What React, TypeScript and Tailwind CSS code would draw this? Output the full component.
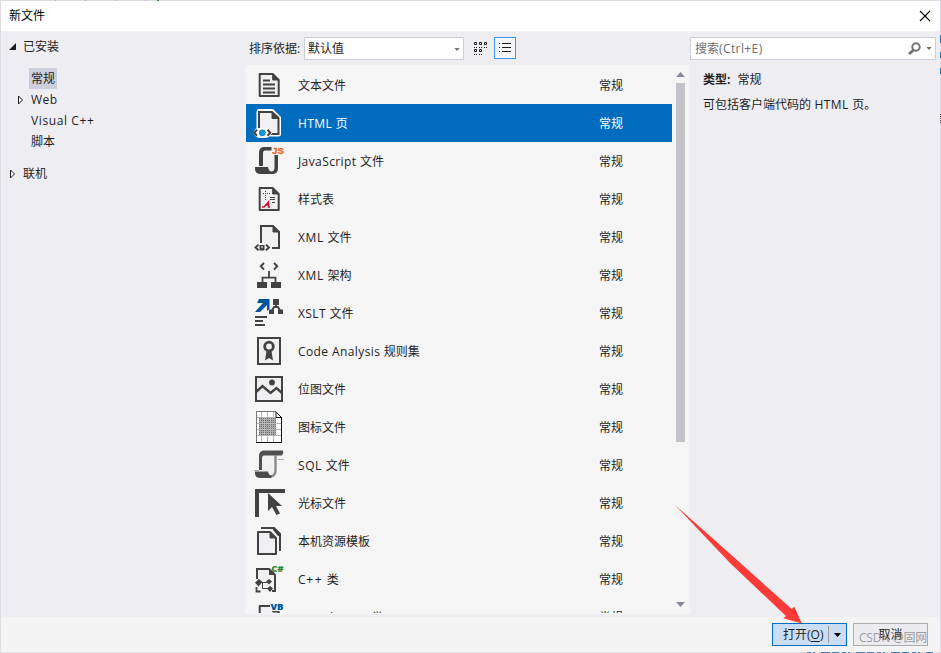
import { useState } from 'react'
import type { ReactNode } from 'react'
import clsx from 'clsx'

const DARK = '#424242'

function Page({ x = 7.7, y = 8, w = 19, h = 22 }: { x?: number; y?: number; w?: number; h?: number }) {
  return (
    <>
      <path
        d={`M${x} ${y}h${w - 6}l6 6v${h - 6}h-${w}z`}
        fill="#f0eff1"
        stroke={DARK}
        strokeWidth="2"
        strokeLinejoin="round"
      />
      <path d={`M${x + w - 6} ${y}v6h6z`} fill={DARK} stroke={DARK} />
    </>
  )
}

function Scroll({ fill = DARK }: { fill?: string }) {
  return (
    <>
      <path d="M9 25V9q0-3 4-3h10v20q0 5-3 5H8z" fill="#f0eff1" />
      <path d="M7 24V10.500Q7 5 12.500 5H22v3.500h-9q-2 0-2 3V24z" fill={fill} />
      <path d="M22.500 13H26v13q0 6-6 6h-3v-2.500h2.500q3 0 3-4z" fill={fill} />
      <path d="M3 25h13q.5 4 3.500 5l-1 2H9q-6 0-6-5z" fill={fill} />
    </>
  )
}

function Badge({ x, y, fill, children }: { x: number; y: number; fill: string; children: string }) {
  return (
    <text x={x} y={y} fill={fill} fontSize="9.500" fontWeight="800" fontFamily="Open Sans, sans-serif">
      {children}
    </text>
  )
}

const icons: Record<string, ReactNode> = {
  text: (
    <>
      <Page />
      <path d="M11 14.500h7M11 18.500h12M11 22.500h12M11 26.500h12" stroke={DARK} strokeWidth="2" />
    </>
  ),
  html: (
    <>
      <path d="M4.500 24V8q0-3 3-3H21l8 8v17q0 2.500-2.500 2.500H15.500L13 34H7q-5-2-5.500-5 .5-3 3-5z" fill="#fff" />
      <path d="M7 24V8h13l6.500 6v16H17" fill="#f0eff1" stroke={DARK} strokeWidth="2" />
      <path d="M20 8v6.500h6.500z" fill={DARK} stroke={DARK} />
      <path d="M6 24h10l4.500 5-4.500 4.500H6L2 29z" fill="#fff" />
      <path d="M5 25.800L2.200 28.800l2.800 3M15.500 25.800l2.800 3-2.800 3" fill="none" stroke={DARK} strokeWidth="2" />
      <circle cx="10.300" cy="28.800" r="3.400" fill="#1592d2" />
    </>
  ),
  js: (
    <>
      <Scroll />
      <path d="M19.500 4H32v9H19.500z" fill="#f5f5f5" />
      <text
        x="20"
        y="12"
        fill="#f26522"
        stroke="#f26522"
        strokeWidth="0.300"
        fontSize="9.800"
        fontWeight="700"
        fontFamily="Liberation Sans, sans-serif"
      >
        JS
      </text>
    </>
  ),
  css: (
    <>
      <Page />
      <path d="M11 13.500h8M13.500 11v10" stroke={DARK} strokeDasharray="1 1" />
      <path d="M18 17.500h5M18 19.500h5M20 22.500h3" stroke={DARK} />
      <path d="M10 27h2l4.500-5v5H18M13 25h4" fill="none" stroke="#c4192f" strokeWidth="1.600" />
    </>
  ),
  xml: (
    <>
      <path d="M9 25V8h12l6 6v16h-7" fill="#f0eff1" stroke={DARK} strokeWidth="2" />
      <path d="M21 8v6h6z" fill={DARK} stroke={DARK} />
      <path d="M6.500 26.800L3.500 29.500l3 2.700M14 26.800l3 2.700-3 2.700" fill="none" stroke={DARK} strokeWidth="1.900" />
      <path d="M7.500 27h5v5.500h-5z" fill={DARK} />
      <path d="M9 28.500h2v1H9z" fill="#fff" />
    </>
  ),
  schema: (
    <>
      <path d="M12 7l-3.200 3.300L12 13.600M22 7l3.200 3.300L22 13.600" fill="none" stroke={DARK} strokeWidth="2" />
      <path d="M17 15v7M10.500 26v-4.300h13V26" fill="none" stroke={DARK} strokeWidth="1.800" />
      <path d="M5 26h10v6H5zM19 26h10v6H19z" fill={DARK} />
    </>
  ),
  xslt: (
    <>
      <path d="M7 5h10.500v10l-2.500 2v-6l-7 7H3l8-9H5z" fill="#00539c" />
      <path d="M21 5h6v6h-6zM17 15.500h5V20h-5zM26 15.500h5V20h-5z" fill={DARK} />
      <path d="M24 10v3.500M20 16.500l2-3.500h4l2 3.500" fill="none" stroke={DARK} strokeWidth="1.800" />
      <path d="M3 23h12M3 27h8M3 31h10" stroke={DARK} strokeWidth="2" />
    </>
  ),
  rules: (
    <>
      <path d="M6 6h22v26H6z" fill="#f0eff1" stroke={DARK} strokeWidth="2" />
      <circle cx="17" cy="14.500" r="4.300" fill="none" stroke={DARK} strokeWidth="2.800" />
      <path d="M14.500 19h5l1.500 9.500-4-2.500-4 2.500z" fill={DARK} />
    </>
  ),
  bitmap: (
    <>
      <path d="M4 7h26v24H4z" fill="#f0eff1" stroke={DARK} strokeWidth="2" />
      <path d="M4 22l6.500-6 8 7 6-5 5.500 5" fill="none" stroke={DARK} strokeWidth="2.400" />
      <circle cx="20" cy="12.500" r="2.900" fill={DARK} />
    </>
  ),
  icon: (
    <>
      <path d="M4.500 3.500h19l6 6v25h-25z" fill="#fff" stroke="#777" />
      <path d="M9.500 4v30M15.500 4v30M21.500 4v30M5 9.500h22M5 27.500h24M5 15.500h24M5 21.500h24" stroke="#b5b5b5" />
      <path d="M7 10h17v17H7z" fill="#a9a9a9" />
      <path
        d="M7 10.500h17M7 12.500h17M7 14.500h17M7 16.500h17M7 18.500h17M7 20.500h17M7 22.500h17M7 24.500h17M7 26.500h17"
        stroke="#707070"
        strokeDasharray="1 1"
      />
      <path d="M12.500 10v17M18.500 10v17M7 15.500h17M7 21.500h17" stroke="#bbb" />
      <path d="M24 4v5.500h5.500v25H4" fill="none" stroke="#111" />
      <path d="M23.500 3.500l6 6" stroke="#111" />
    </>
  ),
  sql: (
    <>
      <path d="M9 24V9q0-3 4-3h12v20q0 4-3 5H8z" fill="#f0eff1" />
      <path d="M7 24V10q0-5.500 5.500-5.500H31q1 3-1 5H12q-2 0-2 3V24z" fill="#505050" />
      <path d="M23.500 9v15q0 6-5 6.500" fill="none" stroke="#8a8a8a" strokeWidth="2.400" />
      <path d="M3 25.500h13q.5 3.500 4 4.500l-1 2H9q-6 0-6-4.500z" fill="#4b4b4b" />
      <path d="M2 24.500h5M26 13.500h6" stroke="#aaa" />
    </>
  ),
  cursor: (
    <>
      <path d="M3 5h30v4H7v24H3z" fill={DARK} />
      <path d="M16 9v18l4-4 4.500 8 3.500-1.500-4-7.500h6z" fill={DARK} />
    </>
  ),
  template: (
    <>
      <path d="M9 6h13l6 6v17" fill="none" stroke={DARK} strokeWidth="2" />
      <path d="M21 5v3l5 6h3v-2l-7-7z" fill={DARK} />
      <Page x={6} y={10} w={18} h={22} />
    </>
  ),
  cpp: (
    <>
      <path d="M5 19V9h12l6 6v16h-3" fill="#f0eff1" stroke={DARK} strokeWidth="2" />
      <path d="M17 9v6h6z" fill={DARK} />
      <path d="M7 19l3.500 3-4 4.500L3 22.500zM14 21.500l3-2.500 3 2.500-3 3zM15 28.500l3-2.500 3 2.500-3 3.500z" fill={DARK} />
      <path d="M8 22.500h7M10.500 23v5.500H16" fill="none" stroke={DARK} />
      <path d="M4.500 27v4.500h4" fill="none" stroke={DARK} strokeWidth="1.800" />
      <Badge x={19.2} y={12} fill="#388a34">
        C#
      </Badge>
    </>
  ),
  vb: (
    <>
      <Page />
      <path d="M18 4h14v9H18z" fill="#f5f5f5" />
      <Badge x={18.5} y={12} fill="#00539c">
        VB
      </Badge>
    </>
  ),
}

const templates = [
  { icon: 'text', name: '文本文件' },
  { icon: 'html', name: 'HTML 页' },
  { icon: 'js', name: 'JavaScript 文件' },
  { icon: 'css', name: '样式表' },
  { icon: 'xml', name: 'XML 文件' },
  { icon: 'schema', name: 'XML 架构' },
  { icon: 'xslt', name: 'XSLT 文件' },
  { icon: 'rules', name: 'Code Analysis 规则集' },
  { icon: 'bitmap', name: '位图文件' },
  { icon: 'icon', name: '图标文件' },
  { icon: 'sql', name: 'SQL 文件' },
  { icon: 'cursor', name: '光标文件' },
  { icon: 'template', name: '本机资源模板' },
  { icon: 'cpp', name: 'C++ 类' },
  { icon: 'vb', name: 'Visual Basic 类' },
]

// latin runs are spaced a little wider than the chinese ones
function Label({ text }: { text: string }) {
  return text.split(/([ -~]+)/).map((part, i) =>
    i % 2 ? (
      <span key={i} className={part.length < 5 ? 'tracking-[0.6px]' : 'tracking-[0.4px]'}>
        {part.split('++').map((s, j) => (
          <span key={j}>
            {j > 0 && <span className="tracking-[1.6px]">++</span>}
            {s}
          </span>
        ))}
      </span>
    ) : (
      part
    ),
  )
}

function Caret({ className }: { className?: string }) {
  return (
    <svg width="7" height="4" viewBox="0 0 7 4" className={clsx('shrink-0', className)} fill="currentColor">
      <path d="M0 0h7L3.500 4z" />
    </svg>
  )
}

function Collapsed() {
  return (
    <svg width="7" height="10" viewBox="0 0 7 10" className="shrink-0">
      <path d="M1.500 1v8l4-4z" fill="#fff" stroke="#1e1e1e" />
    </svg>
  )
}

function Sidebar() {
  return (
    <div className="flex w-[244px] shrink-0 flex-col pl-[7px]">
      <div className="mt-[5px] flex h-[21px] items-center">
        <svg width="9" height="8" viewBox="0 0 9 8" className="mr-[6px]">
          <path d="M8 0v7H1z" fill="#1e1e1e" />
        </svg>
        已安装
      </div>
      <div className="mt-[11px] flex h-[21px] pl-[21px]">
        <span className="flex w-[28px] items-center justify-center bg-[#cccedb]">常规</span>
      </div>
      <div className="flex h-[21px] items-center gap-[7px] pl-[9px]">
        <Collapsed />
        <span className="tracking-[0.5px]">Web</span>
      </div>
      <div className="flex h-[21px] items-center pl-[23px] tracking-[0.6px]">Visual C++</div>
      <div className="flex h-[21px] items-center pl-[23px]">脚本</div>
      <div className="mt-[11px] flex h-[21px] items-center gap-[7px] pl-px">
        <Collapsed />
        联机
      </div>
    </div>
  )
}

function Toolbar() {
  return (
    <div className="flex h-[34px] items-center pl-1">
      <span className="w-[55px] pt-px whitespace-nowrap">排序依据:</span>
      <div className="flex h-[23px] w-[160px] items-center justify-between border border-[#cccedb] bg-white pr-[3px] pl-[3px]">
        <span className="pt-[2px]">默认值</span>
        <Caret className="mt-[2px] h-[3px] w-[6px] text-[#717171]" />
      </div>
      <svg width="14" height="15" viewBox="0 0 14 15" className="mr-[6px] ml-[10px]">
        <path
          d="M.5 1.500h2v2h-2zM5.500 1.500h2v2h-2zM10.500 1.500h2v2h-2zM.5 8.500h2v2h-2zM5.500 8.500h2v2h-2z"
          fill="none"
          stroke="#1e1e1e"
        />
        <path d="M0 6.500h3M5 6.500h3M10 6.500h3M0 13.500h3M5 13.500h3" stroke="#1e1e1e" strokeDasharray="1 1" />
      </svg>
      <div className="flex h-[22px] w-[22px] items-center justify-center border border-[#3399ff] bg-[#f6f6f6]">
        <svg width="12" height="10" viewBox="0 0 12 10" stroke="#1e1e1e">
          <path d="M0 .5h1M0 4.500h1M0 8.500h1M3 .5h9M3 4.500h9M3 8.500h9" />
        </svg>
      </div>
    </div>
  )
}

function TemplateList() {
  const [selected, setSelected] = useState(1)

  return (
    <div className="flex h-[549px] bg-[#f5f5f5]">
      <div className="h-[548px] w-[427px] overflow-hidden pt-px pl-px">
        {templates.map((t, i) => (
          <div
            key={t.icon}
            onClick={() => setSelected(i)}
            className={clsx('flex h-[38px] items-center pl-[6px]', i === selected && 'bg-[#006cbe] text-white')}
          >
            <svg width="34" height="38" viewBox="0 0 34 38" className="mr-3 shrink-0">
              {icons[t.icon]}
            </svg>
            <span className="w-[301px] pt-[2px] whitespace-pre">
              <Label text={t.name} />
            </span>
            <span className="pt-[2px]">常规</span>
          </div>
        ))}
      </div>
      <div className="flex w-[17px] flex-col items-center pt-[7px] pb-[7px]">
        <Caret className="h-[5px] w-[9px] rotate-180 text-[#868999]" />
        <div className="mt-[6px] h-[359px] w-[9px] bg-[#c2c3c9]" />
        <Caret className="mt-auto h-[5px] w-[9px] text-[#868999]" />
      </div>
    </div>
  )
}

function Details() {
  return (
    <div className="flex flex-1 flex-col pt-[6px]">
      <div className="flex h-[23px] w-[246px] items-center border border-[#cccedb] bg-white pr-[3px] pl-1 text-[#6d6d6d]">
        <span className="flex-1">
          <Label text="搜索(Ctrl+E)" />
        </span>
        <svg width="14" height="13" viewBox="0 0 14 13" className="mr-[5px]" fill="none" stroke="#717171">
          <circle cx="9" cy="5" r="3.700" strokeWidth="2" />
          <path d="M6.500 8L2 12" strokeWidth="2.800" />
        </svg>
        <Caret className="h-[3px] w-[6px]" />
      </div>
      <div className="mt-[10px] flex h-5 items-center gap-[7px] pl-[13px]">
        <b>类型:</b>
        <span>常规</span>
      </div>
      <p className="mt-[5px] h-5 pl-[13px] leading-5">
        <Label text="可包括客户端代码的 HTML 页。" />
      </p>
    </div>
  )
}

function Footer() {
  return (
    <div className="flex h-[35px] items-start justify-end gap-[6px] bg-[#f4f4f4] pt-[6px] pr-[12px]">
      <button className="flex h-[23px] w-[75px] items-center border border-[#006cbe] bg-[#c9def5] pl-[10px]">
        <span className="w-[45px] text-left whitespace-nowrap">
          打开(<u className="underline-offset-2">O</u>)
        </span>
        <span className="mr-[5px] h-[17px] w-px bg-[#999]" />
        <Caret className="text-black" />
      </button>
      <button className="relative h-[23px] w-[75px] border border-[#acacac] bg-[#ececf0]">
        取消
        <span className="absolute top-[4px] left-[5px] text-[12px] leading-5 tracking-[-0.2px] whitespace-nowrap text-[#85858a]/80">
          CSDN @固网
        </span>
      </button>
    </div>
  )
}

export default function App() {
  return (
    <div className="relative flex h-[653px] w-[941px] flex-col border border-[#dcdce2] bg-[#eeedf2] font-['Open_Sans','Noto_Sans_CJK_SC',sans-serif] text-[12px] leading-4 text-[#1e1e1e]">
      <div className="flex h-[30px] shrink-0 items-center justify-between bg-white pr-[9px] pl-2 text-black">
        <span>新文件</span>
        <svg width="12" height="12" viewBox="0 0 12 12" stroke="#000" strokeWidth="1.100">
          <path d="M1 1l10 10M11 1L1 11" />
        </svg>
      </div>
      <div className="flex h-[586px] shrink-0">
        <Sidebar />
        <div className="w-[445px] shrink-0">
          <Toolbar />
          <TemplateList />
        </div>
        <Details />
      </div>
      <Footer />
      {/* arrow pointing at the open button */}
      <svg width="131" height="122" viewBox="0 0 131 122" className="absolute top-[502px] left-[672px]">
        <path d="M2 2L64 57l54.700 49 2.600-2.300 7.600 16.800-18.600-5.200 2.700-2.300L57 60z" fill="#fb3b38" />
      </svg>
      {/* slivers of the window behind the dialog */}
      <svg width="941" height="653" viewBox="0 0 941 653" className="pointer-events-none absolute -top-px -left-px">
        <path d="M55 .5h1M85 .5h1M115 .5h1M145 .5h1" stroke="#aaaab2" />
        <path d="M157 .5h2" stroke="#388a34" />
        <path d="M940.500 35v8M940.500 52v6M940.500 68v6" stroke="#1a73c4" />
        <path d="M940.500 114v10" stroke="#444" strokeDasharray="1 1" />
        <path d="M807 652.500h126" stroke="#3c82c4" strokeDasharray="4 2 2 6 9 2 7 3" />
      </svg>
    </div>
  )
}
